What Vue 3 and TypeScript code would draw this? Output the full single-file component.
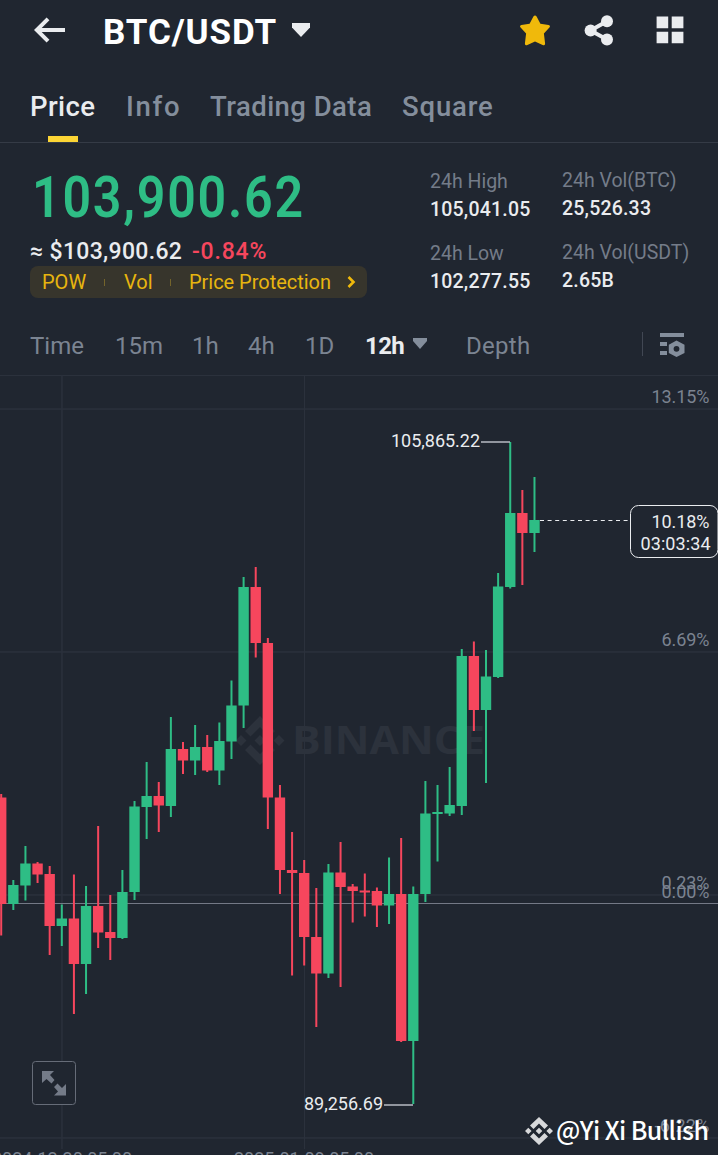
<script setup lang="ts">
type Candle = [open: number, close: number, high: number, low: number, up: 0 | 1]

// body top, body bottom, wick top, wick bottom, rising
const candles: Candle[] = [
  [797.5, 904, 794, 935.5, 0], [885, 904, 880, 910, 1], [863.5, 885.5, 846, 900.5, 1],
  [863.5, 874.5, 862, 883, 0], [874, 926, 866, 955, 0], [918.5, 926, 904.5, 946, 1],
  [918.5, 964, 874.5, 1014, 0], [906, 964, 886, 994, 1], [906, 932.5, 826, 948, 0],
  [932, 938, 895, 960, 0], [892, 938, 870, 939, 1], [806.5, 892, 801, 900, 1],
  [796, 807, 762, 839, 1], [796, 805.5, 782, 832, 0], [749, 806, 717, 817, 1],
  [749, 760.5, 742, 774, 0], [747, 760.5, 725, 775, 1], [747, 770.5, 735, 772, 0],
  [741, 770.5, 722.5, 785, 1], [705.5, 741.5, 680.5, 759, 1], [587, 705.5, 577, 728, 1],
  [587, 643, 567, 657.5, 0], [643, 797.5, 638, 829, 0], [797.5, 870, 785, 894, 0],
  [870, 873, 832, 975.5, 0], [873, 937, 860, 965.5, 0], [937, 973.5, 888, 1027, 0],
  [872.5, 973.5, 864, 978, 1], [872.5, 887, 842, 987, 0], [886.5, 891, 884, 922.5, 0],
  [890.5, 892.5, 873.5, 916.5, 0], [891, 905.5, 887.5, 927, 0], [894, 905.5, 857.5, 924, 1],
  [894, 1041, 838, 1042, 0], [894, 1041, 886.5, 1104, 1], [813.5, 894, 781, 902, 1],
  [812, 814, 785, 861.5, 1], [805, 813.5, 767, 816, 1], [656, 806, 649, 815, 1],
  [656, 710, 641.5, 731, 0], [676.5, 710, 650, 783, 1], [586.5, 677, 573, 678, 1],
  [513, 587, 442, 588.5, 1], [513, 533, 490, 585, 0], [520, 533, 477, 552, 1],
]
const bars = candles.map(([top, bottom, high, low, up], i) => ({
  x: 1.2 + i * 12.12, top, h: bottom - top, high, wick: low - high, fill: up ? '#2ebd85' : '#f6465d',
}))
const axis = [
  { y: 403, t: '13.15%', w: 58 },
  { y: 646, t: '6.69%', w: 48 },
  { y: 889, t: '0.23%', w: 48 },
  { y: 897.5, t: '0.00%', w: 48 },
  { y: 1132, t: '-6.22%', w: 55 },
]
const intervals = [
  { t: 'Time', c: 'i-time' }, { t: '15m', c: 'i-15m' }, { t: '1h', c: 'i-1h' },
  { t: '4h', c: 'i-4h' }, { t: '1D', c: 'i-1d' },
]
</script>

<template>
  <main class="screen">
    <header class="top">
      <svg class="back" width="32" height="26" viewBox="0 0 32 26">
        <path d="M14 1.8 2.8 13 14 24.2M3.5 13H31" fill="none" stroke="#eaecef" stroke-width="4" />
      </svg>
      <h1>BTC/USDT</h1>
      <svg class="caret" width="18" height="14" viewBox="0 0 18 14"><path d="M0 0H18V4.500L9 14 0 4.500Z" fill="#eaecef" /></svg>
      <span class="grow"></span>
      <svg class="star" width="30" height="31" viewBox="0 0 30 31">
        <path d="M13.400 1.400Q15-.6 16.600 1.400L20.400 8.700 28.600 9.900Q30.800 10.600 29.400 12.600L23.900 18.500 25.100 28.500Q25 31 22.600 30.100L15 26.600 7.400 30.100Q5 31 4.900 28.500L6.100 18.500.6 12.600Q-.8 10.600 1.400 9.900L9.600 8.700Z" fill="#f0b90b" />
      </svg>
      <svg class="share" width="30" height="31" viewBox="0 0 30 31">
        <path d="M6.500 15.500 23 6.300M6.500 15.500 23 24.500" stroke="#eaecef" stroke-width="4" />
        <g fill="#eaecef"><circle cx="6.600" cy="15.500" r="6" /><circle cx="23" cy="6.300" r="6" /><circle cx="23" cy="24.500" r="6" /></g>
      </svg>
      <svg class="tiles" width="28" height="28" viewBox="0 0 28 28">
        <path d="M.6.600h11.600v11.600H.6ZM15.700.600h11.700v11.600H15.700ZM.6 15.700h11.600v11.500H.6ZM15.700 15.700h11.700v11.500H15.700Z" fill="#eaecef" />
      </svg>
    </header>

    <nav class="tabs">
      <span class="tab active t1">Price</span>
      <span class="tab t2">Info</span>
      <span class="tab t3">Trading Data</span>
      <span class="tab t4">Square</span>
    </nav>

    <section class="ticker">
      <div class="quote">
        <div class="last">103,900.62</div>
        <div class="fiat"><span class="usd">≈ $103,900.62</span><span class="chg">-0.84%</span></div>
        <div class="tags">
          <span class="pow">POW</span><i></i><span class="vol">Vol</span><i></i><span class="prot">Price Protection</span>
          <svg width="9" height="12" viewBox="0 0 9 12"><path d="M1.500 1 6.500 6 1.500 11" fill="none" stroke="#f0b90b" stroke-width="2.600" /></svg>
        </div>
      </div>
      <dl class="stats left">
        <dt>24h High</dt><dd>105,041.05</dd>
        <dt>24h Low</dt><dd>102,277.55</dd>
      </dl>
      <dl class="stats right">
        <dt>24h Vol(BTC)</dt><dd>25,526.33</dd>
        <dt>24h Vol(USDT)</dt><dd>2.65B</dd>
      </dl>
    </section>

    <nav class="intervals">
      <span v-for="i in intervals" :key="i.t" :class="i.c">{{ i.t }}</span>
      <b>12h</b>
      <svg class="mini" width="14" height="11" viewBox="0 0 14 11"><path d="M0 0H14V3L7 11 0 3Z" fill="#848e9c" /></svg>
      <span class="depth">Depth</span>
      <span class="grow"></span>
      <em></em>
      <svg class="settings" width="25" height="24" viewBox="0 0 25 24">
        <path d="M0 0H24V4H0ZM0 9H7V13H0ZM0 18H7V22H0Z" fill="#848e9c" />
        <path fill-rule="evenodd" d="M16.500 7.600 24.500 11.800V20L16.500 24 8.800 20V11.800ZM16.500 12.900A2.900 2.900 0 1 0 16.500 18.700 2.900 2.900 0 1 0 16.500 12.900Z" fill="#848e9c" />
      </svg>
    </nav>

    <svg class="chart" width="718" height="780" viewBox="0 375 718 780">
      <g fill="#2b313c">
        <rect x="0" y="374.500" width="718" height="1.500" />
        <rect x="0" y="408.300" width="718" height="1.500" /><rect x="0" y="651.200" width="718" height="1.500" />
        <rect x="0" y="894.200" width="718" height="1.500" /><rect x="0" y="1137.200" width="718" height="1.500" />
        <rect x="61.200" y="375" width="1.500" height="774" /><rect x="304" y="375" width="1" height="774" />
      </g>
      <g fill="#2c323c">
        <g transform="translate(260 740.500)">
          <path d="M0-24.500 15-9.500 9.500-4 0-13.500-9.500-4-15-9.500ZM0 24.500 15 9.500 9.500 4 0 13.500-9.500 4-15 9.500ZM0-5.500 5.500 0 0 5.500-5.500 0ZM-19-5.500-13.500 0-19 5.500-24.500 0ZM19-5.500 24.500 0 19 5.500 13.500 0Z" />
        </g>
        <text class="brand" x="292" y="754" textLength="193" lengthAdjust="spacingAndGlyphs">BINANCE</text>
      </g>
      <rect x="0" y="903" width="718" height="1" fill="#747986" />
      <g v-for="(b, i) in bars" :key="i" :fill="b.fill">
        <rect :x="b.x - 1" :y="b.high" width="2" :height="b.wick" />
        <rect :x="b.x - 5.200" :y="b.top" width="10.400" :height="b.h" />
      </g>
      <path d="M481 442H510M384 1105H413" stroke="#b7bbc2" stroke-width="1.500" />
      <path d="M540 520.500H630" stroke="#eaecef" stroke-width="1.200" stroke-dasharray="4 3.600" />
      <g class="axis">
        <text v-for="a in axis" :key="a.t" :x="709.500 - a.w" :y="a.y" :textLength="a.w">{{ a.t }}</text>
        <text x="-8" y="1165" textLength="140">2024-12-30 05:00</text>
        <text x="234" y="1165" textLength="140">2025-01-09 05:00</text>
      </g>
      <g class="mark">
        <text x="391" y="447" textLength="89">105,865.22</text>
        <text x="304" y="1110" textLength="79">89,256.69</text>
        <rect x="630.500" y="505.500" width="87.500" height="52" rx="8" fill="#202630" stroke="#eaecef" />
        <text x="651.500" y="528" textLength="58">10.18%</text>
        <text x="640.500" y="550" textLength="70">03:03:34</text>
      </g>
      <rect x="32.500" y="1061.500" width="43" height="43" rx="3" fill="#202630" stroke="#666c78" />
      <path d="M42 1071H54L50 1075 54.500 1080 51.500 1083.500 46.500 1079 42 1083ZM66 1095.500H54L58 1091.500 54 1087 57.500 1083.500 62 1088 66 1084Z" fill="#747b88" />
      <g transform="translate(539 1131)" fill="#d7d8da">
        <path d="M0-14 9-5.500 5.500-2 0-7.500-5.500-2-9-5.500ZM0 14 9 5.500 5.500 2 0 7.500-5.500 2-9 5.500ZM0-3.300 3.300 0 0 3.300-3.300 0ZM-10.700-3.300-7.400 0-10.700 3.300-14 0ZM10.700-3.300 14 0 10.700 3.300 7.400 0Z" />
      </g>
      <text class="author" x="556" y="1140" textLength="153">@Yi Xi Bullish</text>
    </svg>
  </main>
</template>

<style>
html, body { margin: 0; background: #202630; overflow: hidden; }
</style>

<style scoped>
.screen { width: 718px; height: 1155px; overflow: hidden; background: #202630; color: #eaecef; font-family: Roboto, "Liberation Sans", sans-serif; white-space: nowrap; }
.grow { flex: 1; }
.top { display: flex; height: 62px; align-items: center; }
.back { margin-left: 34px; margin-top: -2px; }
h1 { margin: 3px 0 0 37px; width: 174px; font-size: 35px; line-height: 44px; font-weight: 700; letter-spacing: 0.9px; color: #fff; }
.caret { margin-left: 15px; margin-top: -2px; }
.star { margin-right: 34px; margin-top: -2px; }
.share { margin-right: 42px; margin-top: -1px; }
.tiles { margin-right: 34px; margin-top: -2px; }
.tabs { position: relative; display: flex; height: 80px; border-bottom: 1px solid #353b46; }
.tab { margin-top: 27px; height: 53px; line-height: 36px; font-size: 27.500px; font-weight: 500; color: #848e9c; }
.active { position: relative; color: #eaecef; }
.active::after { content: ""; position: absolute; left: 18px; bottom: 0; width: 30px; height: 6px; background: #fcd535; }
.t1 { margin-left: 30px; width: 96px; letter-spacing: 0.400px; }
.t2 { width: 84px; letter-spacing: 1.700px; }
.t3 { width: 192px; letter-spacing: 0.450px; }
.t4 { letter-spacing: 0.850px; }
.ticker { display: flex; height: 173px; }
.quote { width: 400px; padding-left: 30px; box-sizing: border-box; }
.last { margin: 21px 0 0 2px; font-size: 57px; line-height: 67px; height: 66px; font-weight: 600; color: #2ebd85; transform: scaleX(.88); transform-origin: left; letter-spacing: 2px; }
.fiat { display: flex; height: 36px; line-height: 43px; font-size: 23px; font-weight: 500; }
.usd { width: 162px; letter-spacing: 0.320px; }
.chg { color: #f6465d; letter-spacing: 0.800px; }
.tags { display: flex; align-items: center; box-sizing: border-box; width: 337px; height: 32px; border-radius: 8px; padding-left: 12px; background: #37352c; color: #e8b50f; font-size: 20px; }
.tags i { width: 1px; height: 7px; background: #74642b; }
.pow { width: 62px; }
.vol { width: 46px; margin-left: 19px; }
.prot { width: 158px; margin-left: 18px; letter-spacing: -0.030px; }
.stats { margin: 0; font-size: 19.500px; line-height: 24px; }
.left { padding: 27px 0 0 30px; width: 132px; box-sizing: border-box; flex: none; width: 162px; }
.right { padding-top: 26px; }
.stats dt { color: #747c89; height: 24px; }
.stats dd { margin: 2px 0 18px; height: 28px; line-height: 28px; font-weight: 500; letter-spacing: 0.200px; }
.intervals { display: flex; height: 59px; align-items: center; font-size: 24px; color: #7b8492; }
.i-time { margin-left: 30px; width: 85px; }
.i-15m { width: 77px; }
.i-1h { width: 56px; }
.i-4h { width: 57px; }
.i-1d { width: 60px; }
b { color: #eaecef; font-weight: 700; width: 48px; letter-spacing: -0.600px; }
.mini { margin-top: -4px; }
.depth { margin-left: 39px; letter-spacing: 0.300px; }
em { width: 1px; height: 24px; background: #414753; margin-top: -3px; }
.settings { margin: -2px 33px 0 17px; }
.chart { display: block; }
.brand { font: 700 39px "Open Sans", sans-serif; }
.axis text { font-size: 18px; fill: #7b8390; }
.mark text { font-size: 18px; fill: #eaecef; }
.author { font: 500 25px "Noto Sans CJK SC", sans-serif; fill: #fff; }
</style>
